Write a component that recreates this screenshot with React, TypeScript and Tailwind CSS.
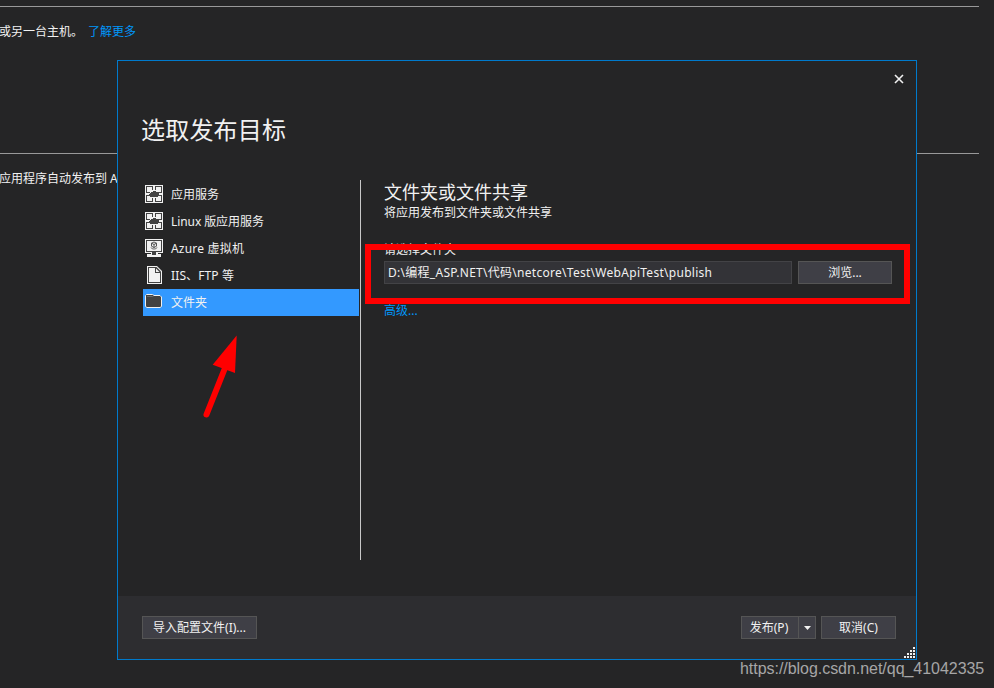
import { useState, type ReactNode } from "react";

interface PublishTarget {
  id: string;
  label: string;
  icon: ReactNode;
  labelClass?: string;
}

function AppServiceIcon() {
  return (
    <svg className="w-[18px] h-[18px] shrink-0" viewBox="0 0 18 18" shapeRendering="crispEdges">
      <rect width="18" height="18" fill="#f1f1f1" />
      {/* corner brackets */}
      <path
        d="M1 1h7v4H7V2H2v5h3v1H1zM10 1h7v7h-4V7h3V2h-5v3h-1zM1 10h4v1H2v5h5v-3h1v4H1zM13 10h4v7h-7v-4h1v3h5v-5h-3z"
        fill="#424242"
      />
      {/* cloud */}
      <path d="M8 6h3v1h2v1h1v3h-1v1H5v-1H4V9h1V8h1V7h2z" fill="#424242" />
    </svg>
  );
}

function VirtualMachineIcon() {
  return (
    <svg className="w-[18px] h-[18px] shrink-0" viewBox="0 0 18 18" shapeRendering="crispEdges">
      <path d="M0 0h18v14h-5v1h3v3H2v-3h4v-1H0z" fill="#f1f1f1" />
      <path d="M1 1h16v12H1z" fill="#424242" />
      <path d="M2 2h14v10H2z" fill="#f1f1f1" />
      <path d="M7 13h4v3H7z" fill="#424242" />
      <g shapeRendering="geometricPrecision" fill="none" stroke="#424242">
        <path d="M9 3l2.500 1.200v3L9 8.500 6.500 7.200v-3zM6.500 4.200L9 5.500l2.500-1.300M9 5.500v3" strokeWidth="0.900" />
        <path d="M6 8.500c.6 2 5.400 2 6 0" strokeWidth="0.800" />
      </g>
    </svg>
  );
}

function DocumentIcon() {
  return (
    <svg className="w-[18px] h-[18px] shrink-0" viewBox="0 0 18 18">
      <path d="M2 0h10l5 5v13H2z" fill="#f1f1f1" />
      <path d="M3 1h8.500L16 5.500V17H3z" fill="#424242" />
      <path d="M4 2h6v5h5v9H4z" fill="#f1f1f1" />
      <path d="M11 2.500L14.500 6H11z" fill="#f1f1f1" />
    </svg>
  );
}

function FolderIcon() {
  return (
    <svg className="w-[18px] h-[18px] shrink-0" viewBox="0 0 18 18">
      <path d="M1.500 1.500h6L9 2.500h6l1.500 1.500v9.500L15 14.500H2L.5 13.500V2.500z" fill="#424242" stroke="#f1f1f1" />
      <path d="M2 3.500h5.500L9 2.500" fill="none" stroke="#8a8a8a" strokeWidth="0.600" />
    </svg>
  );
}

const targets: PublishTarget[] = [
  { id: "app-service", label: "应用服务", icon: <AppServiceIcon /> },
  { id: "app-service-linux", label: "Linux 版应用服务", icon: <AppServiceIcon />, labelClass: "tracking-[-0.08px]" },
  { id: "azure-vm", label: "Azure 虚拟机", icon: <VirtualMachineIcon />, labelClass: "tracking-[0.200px]" },
  { id: "iis-ftp", label: "IIS、FTP 等", icon: <DocumentIcon />, labelClass: "tracking-[0.120px]" },
  { id: "folder", label: "文件夹", icon: <FolderIcon /> },
];

const buttonClass =
  "flex items-center justify-center h-[23px] bg-[#3f3f46] border border-[#555555] text-[#f1f1f1]";

function ResizeGrip() {
  return (
    <svg className="absolute right-px bottom-px w-[11px] h-[11px]" viewBox="0 0 11 11" shapeRendering="crispEdges" fill="#f1f1f1">
      {[0, 1, 2, 3].map((col) =>
        Array.from({ length: col + 1 }, (_, i) => (
          <rect key={`${col}-${i}`} x={col * 3} y={9 - i * 3} width="2" height="2" />
        ))
      )}
    </svg>
  );
}

function PublishDialog() {
  const [selected, setSelected] = useState("folder");
  const [path, setPath] = useState("D:\\编程_ASP.NET\\代码\\netcore\\Test\\WebApiTest\\publish");

  return (
    <div className="absolute left-[117px] top-[60px] w-[800px] h-[600px] flex flex-col bg-[#252526] border border-[#007acc]">
      {/* Title */}
      <div className="flex justify-end h-9 pr-3 pt-[13px]">
        <button className="w-[11px] h-[10px]" aria-label="Close">
          <svg className="w-[11px] h-[10px]" viewBox="0 0 11 10">
            <path d="M2 1l8 8M10 1l-8 8" stroke="#f1f1f1" strokeWidth="1.600" />
          </svg>
        </button>
      </div>
      <h1 className="pl-[23px] h-[83px] pt-[15px] text-[24px] leading-9 tracking-[0.200px]">选取发布目标</h1>

      {/* Target list and folder settings */}
      <div className="flex h-[380px] pl-[25px]">
        <div className="w-[216px] pt-px">
          {targets.map((t) => (
            <div
              key={t.id}
              onClick={() => setSelected(t.id)}
              className={`flex items-start h-[27px] pt-1 pl-[2px] gap-2 ${selected === t.id ? "bg-[#3399ff]" : ""}`}
            >
              {t.icon}
              <span className={`whitespace-nowrap leading-[19px] ${t.labelClass ?? ""}`}>{t.label}</span>
            </div>
          ))}
        </div>
        <div className="w-px ml-px bg-[#c8c8c8]" />
        <div className="pl-[23px]">
          <h2 className="text-[18px] leading-6">文件夹或文件共享</h2>
          <p className="mt-px leading-4">将应用发布到文件夹或文件共享</p>
          <label className="block mt-[21px] h-[19px] leading-4">请选择文件夹</label>
          <div className="flex gap-1.5">
            <input
              value={path}
              onChange={(e) => setPath(e.target.value)}
              className="w-[408px] h-[23px] px-[3px] pb-px bg-[#333337] border border-[#434346] text-[#f1f1f1] tracking-[0.280px] outline-none"
            />
            <button className={`${buttonClass} w-[94px]`}>浏览...</button>
          </div>
          <a className="block mt-[19px] leading-4 text-[#0097fb]">高级...</a>
        </div>
      </div>

      {/* Footer */}
      <div className="relative mt-auto flex h-[63px] px-6 pt-5 pr-5 bg-[#2d2d30]">
        <button className={`${buttonClass} w-[115px]`}>导入配置文件(I)...</button>
        <div className="ml-auto flex gap-[5px]">
          <div className="flex">
            <button className={`${buttonClass} w-[58px] pr-0.5`}>发布(P)</button>
            <button className={`${buttonClass} -ml-px w-[18px]`}>
              <svg className="w-[7px] h-1" viewBox="0 0 7 4">
                <path d="M0 0h7L3.500 4z" fill="#f1f1f1" />
              </svg>
            </button>
          </div>
          <button className={`${buttonClass} w-[75px]`}>取消(C)</button>
        </div>
        <ResizeGrip />
      </div>
    </div>
  );
}

export default function App() {
  return (
    <div className="relative w-[994px] h-[688px] overflow-hidden bg-[#252526] text-[#f1f1f1] text-[12px] font-['Noto_Sans','Noto_Sans_CJK_SC',sans-serif]">
      {/* Page behind the dialog */}
      <div className="pt-1.5 pr-[15px]">
        <div className="h-[147px] border-t border-[#999999] pt-4">
          <div className="flex gap-[5px] leading-[18px] whitespace-nowrap">
            <span className="-ml-px">或另一台主机。</span>
            <a className="text-[#0097fb]">了解更多</a>
          </div>
        </div>
        <div className="border-t border-[#999999] pt-4">
          <p className="-ml-px leading-[18px]">应用程序自动发布到 Azure</p>
        </div>
      </div>

      <PublishDialog />

      {/* Annotations */}
      <div className="absolute left-[365px] top-[244px] w-[545px] h-[60px] border-6 border-[#ff0000] pointer-events-none" />
      <svg className="absolute left-[200px] top-[332px] w-10 h-[88px] pointer-events-none" viewBox="0 0 40 88">
        <path d="M6.500 82.500L25 36" stroke="#ff0000" strokeWidth="6" strokeLinecap="round" />
        <path d="M36.700 3.500L12.700 32.700 35 41z" fill="#ff0000" />
      </svg>
      <div className="absolute left-[740px] top-[659px] text-[16px] leading-5 tracking-[-0.040px] text-[#a6a6a6] font-['Liberation_Sans',sans-serif]">
        https://blog.csdn.net/qq_41042335
      </div>
    </div>
  );
}
